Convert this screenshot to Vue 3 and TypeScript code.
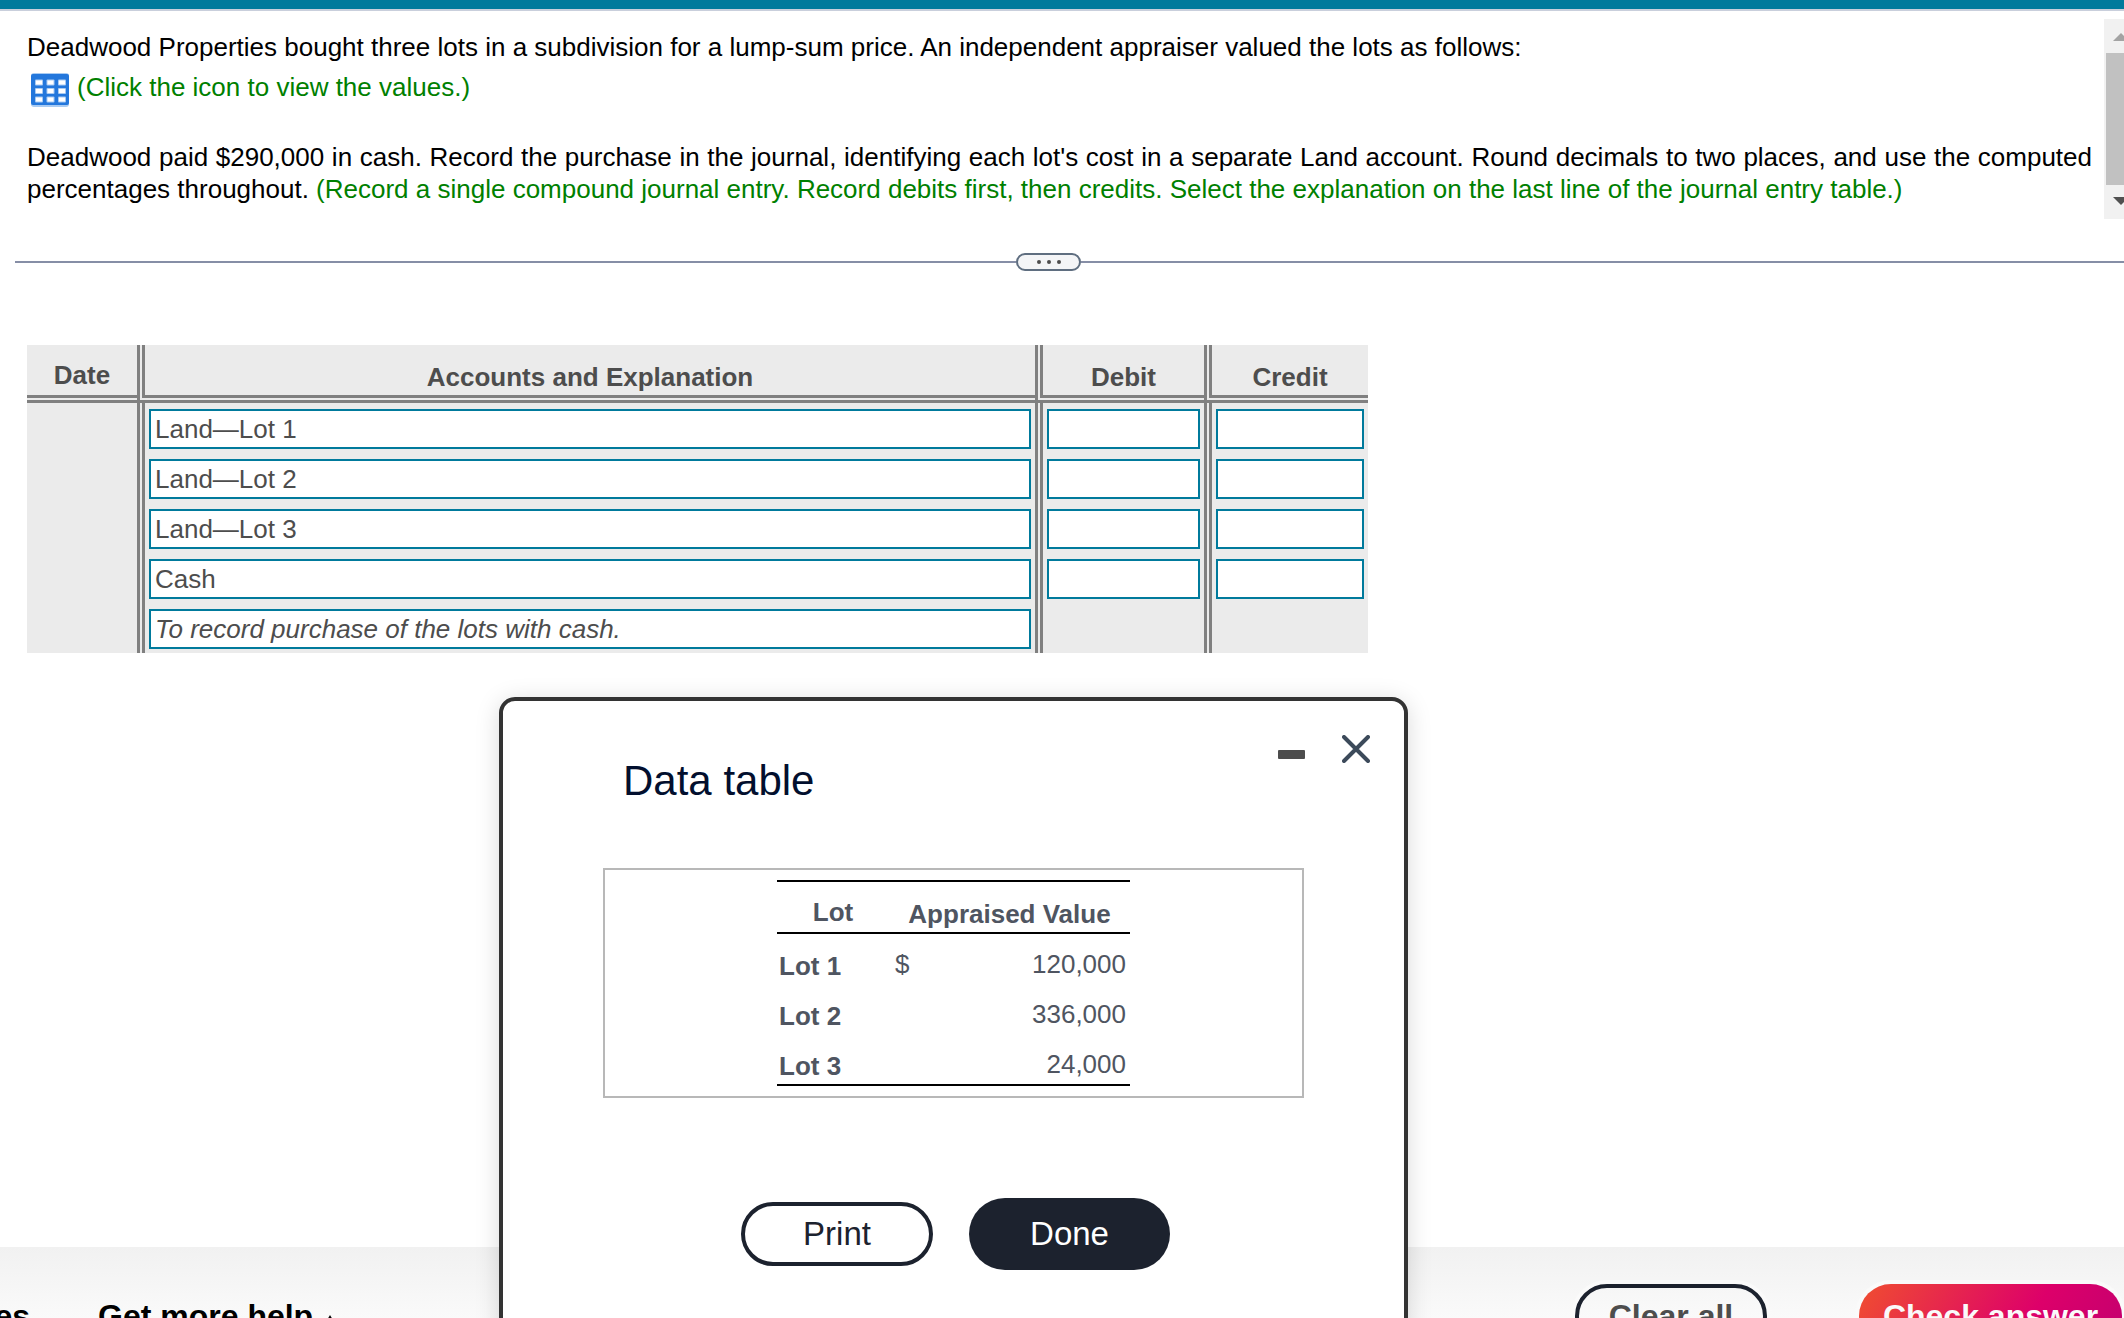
<script setup lang="ts">
import { ref } from 'vue'

interface JournalRow {
  account: string
  debit: string
  credit: string
}

interface LotRow {
  lot: string
  currency: string
  value: string
}

const rows = ref<JournalRow[]>([
  { account: 'Land—Lot 1', debit: '', credit: '' },
  { account: 'Land—Lot 2', debit: '', credit: '' },
  { account: 'Land—Lot 3', debit: '', credit: '' },
  { account: 'Cash', debit: '', credit: '' },
])
const explanation = ref('To record purchase of the lots with cash.')

const lots: LotRow[] = [
  { lot: 'Lot 1', currency: '$', value: '120,000' },
  { lot: 'Lot 2', currency: '', value: '336,000' },
  { lot: 'Lot 3', currency: '', value: '24,000' },
]

const iconColumns = [4, 15.5, 27]
const iconRows = [6.5, 15, 23.5]
</script>

<template>
  <div class="page">
    <div class="top-bar"></div>

    <section class="question">
      <div class="prompt">
        <p>
          Deadwood Properties bought three lots in a subdivision for a lump-sum price. An independent appraiser valued
          the lots as follows:
        </p>
        <a class="values-link" href="#values">
          <svg class="grid-icon" viewBox="0 0 38 34" aria-hidden="true">
            <rect width="38" height="34" rx="3" fill="#a9cbf2" />
            <rect y="1" width="38" height="31" rx="2" fill="#2377dc" />
            <template v-for="y in iconRows" :key="y">
              <g v-for="x in iconColumns" :key="x">
                <rect :x="x" :y="y" width="8" height="6" rx="1" fill="#a9cbf2" />
                <rect :x="x + 1" :y="y + 1" width="6" height="4" fill="#fff" />
              </g>
            </template>
          </svg>
          <span>(Click the icon to view the values.)</span>
        </a>
        <p>
          Deadwood paid $290,000 in cash. Record the purchase in the journal, identifying each lot's cost in a separate
          Land account. Round decimals to two places, and use the computed percentages throughout.
          <span class="hint">(Record a single compound journal entry. Record debits first, then credits. Select the
            explanation on the last line of the journal entry table.)</span>
        </p>
      </div>
      <div class="scrollbar" aria-hidden="true">
        <svg viewBox="0 0 20 34"><path d="M9 22L17 14L25 22Z" fill="#a3a3a3" /></svg>
        <div class="thumb"></div>
        <svg viewBox="0 0 20 34"><path d="M9 12L17 20L25 12Z" fill="#505050" /></svg>
      </div>
    </section>

    <div class="divider">
      <span class="rule rule-left"></span>
      <button class="handle" type="button" aria-label="Resize question area">
        <i></i><i></i><i></i>
      </button>
      <span class="rule rule-right"></span>
    </div>

    <main class="work">
      <table class="journal">
        <colgroup>
          <col class="c-date" />
          <col class="c-account" />
          <col class="c-debit" />
          <col class="c-credit" />
        </colgroup>
        <thead>
          <tr>
            <th scope="col">Date</th>
            <th scope="col">Accounts and Explanation</th>
            <th scope="col">Debit</th>
            <th scope="col">Credit</th>
          </tr>
        </thead>
        <tbody>
          <tr v-for="(row, i) in rows" :key="i">
            <td></td>
            <td><input v-model="row.account" type="text" :aria-label="`Account, line ${i + 1}`" /></td>
            <td><input v-model="row.debit" type="text" :aria-label="`Debit, line ${i + 1}`" /></td>
            <td><input v-model="row.credit" type="text" :aria-label="`Credit, line ${i + 1}`" /></td>
          </tr>
          <tr>
            <td></td>
            <td><input v-model="explanation" class="explanation" type="text" aria-label="Explanation" /></td>
            <td></td>
            <td></td>
          </tr>
        </tbody>
      </table>
    </main>

    <footer class="footer">
      <span class="cut-label">es</span>
      <button class="help" type="button">
        Get more help
        <svg viewBox="0 0 14 14" aria-hidden="true"><path d="M7 0L14 12H0Z" fill="#000" /></svg>
      </button>
      <button class="foot-button clear" type="button">Clear all</button>
      <button class="foot-button check" type="button">Check answer</button>
    </footer>

    <section class="dialog" role="dialog" aria-labelledby="dialog-title">
      <header class="dialog-head">
        <h2 id="dialog-title">Data table</h2>
        <button class="minimize" type="button" aria-label="Minimize"><span></span></button>
        <button class="close" type="button" aria-label="Close">
          <svg viewBox="0 0 28 28" aria-hidden="true">
            <path d="M2 2L26 26M26 2L2 26" fill="none" stroke="#3c4a5a" stroke-width="4" stroke-linecap="round" />
          </svg>
        </button>
      </header>
      <div class="data-box">
        <table class="lots">
          <colgroup>
            <col class="c-lot" />
            <col class="c-currency" />
            <col />
          </colgroup>
          <thead>
            <tr>
              <th scope="col">Lot</th>
              <th scope="col" colspan="2">Appraised Value</th>
            </tr>
          </thead>
          <tbody>
            <tr v-for="row in lots" :key="row.lot">
              <th scope="row">{{ row.lot }}</th>
              <td>{{ row.currency }}</td>
              <td class="amount">{{ row.value }}</td>
            </tr>
          </tbody>
        </table>
      </div>
      <div class="dialog-actions">
        <button class="print" type="button">Print</button>
        <button class="done" type="button">Done</button>
      </div>
    </section>
  </div>
</template>

<style>
body {
  margin: 0;
  background: #fff;
}
</style>

<style scoped>
.page {
  position: relative;
  display: flex;
  flex-direction: column;
  height: 100vh;
  overflow: hidden;
  font-family: "Liberation Sans", Arial, sans-serif;
  font-size: 26px;
  line-height: 32px;
  color: #000;
}

.page * {
  box-sizing: border-box;
}

button,
input {
  margin: 0;
  padding: 0;
  border: 0;
  font: inherit;
  color: inherit;
  background: none;
}

svg {
  display: block;
}

.top-bar {
  flex: none;
  height: 11px;
  background: #007a9c;
  border-bottom: 2px solid #c9cfdc;
}

.question {
  display: flex;
  margin-top: 8px;
  height: 200px;
}

.prompt {
  flex: 1;
  min-width: 0;
  padding: 12px 12px 0 27px;
}

.prompt p {
  margin: 0;
  text-align: justify;
}

.values-link {
  display: flex;
  margin: 8px 0 38px 4px;
  color: #008000;
  text-decoration: none;
}

.grid-icon {
  width: 38px;
  height: 34px;
  margin: 2px 8px -4px 0;
}

.hint {
  color: #008000;
}

.scrollbar {
  display: flex;
  flex-direction: column;
  width: 20px;
  background: #f1f1f1;
}

.scrollbar svg {
  width: 20px;
  height: 34px;
}

.thumb {
  flex: 1;
  margin-left: 2px;
  background: #c1c1c1;
}

.divider {
  display: flex;
  align-items: center;
  height: 18px;
  margin: 34px 0 0 15px;
}

.rule {
  height: 2px;
  background: #868ea6;
}

.rule-left {
  flex: 24;
}

.rule-right {
  flex: 25;
}

.handle {
  display: flex;
  align-items: center;
  justify-content: center;
  gap: 6px;
  width: 65px;
  height: 18px;
  border: 2px solid #5f6e80;
  border-radius: 9px;
  background: #f4f5f7;
}

.handle i {
  width: 4px;
  height: 4px;
  border-radius: 2px;
  background: #4d4d4d;
}

.work {
  flex: 1;
  min-height: 0;
  padding: 74px 0 0 27px;
}

table {
  border-collapse: separate;
  border-spacing: 0;
  table-layout: fixed;
}

th,
td {
  padding: 0;
}

.journal {
  width: 1341px;
  background: #ebebeb;
  color: #4d4d4d;
}

.c-date {
  width: 110px;
}

.c-account {
  width: 898px;
}

.c-debit {
  width: 169px;
}

.c-credit {
  width: 164px;
}

thead th {
  vertical-align: bottom;
  padding-bottom: 2px;
}

thead th:first-child {
  padding-bottom: 4px;
}

.journal th {
  height: 58px;
  border-bottom: 8px double #808080;
}

.journal th + th,
.journal td + td {
  border-left: 8px double #808080;
}

.journal td {
  height: 50px;
  padding: 6px 4px 4px;
}

.journal input {
  display: block;
  width: 100%;
  height: 40px;
  padding: 0 4px;
  border: 2px solid #007a9c;
  background: #fff;
}

.journal .explanation {
  font-style: italic;
}

.footer {
  flex: none;
  display: flex;
  align-items: flex-start;
  height: 71px;
  padding: 37px 2px 0 0;
  overflow: hidden;
  background: linear-gradient(#f1f1f1, #fafafa);
  font-size: 32px;
  font-weight: bold;
  line-height: 64px;
}

.cut-label {
  display: flex;
  justify-content: flex-end;
  width: 30px;
  overflow: hidden;
}

.help {
  display: flex;
  align-items: center;
  gap: 10px;
  margin: 0 auto 0 68px;
}

.help svg {
  width: 14px;
  height: 14px;
  margin-top: 12px;
}

.foot-button {
  height: 64px;
  border-radius: 32px;
  box-shadow: 0 0 0 4px #fafafa;
  line-height: 56px;
}

.clear {
  width: 192px;
  margin-right: 92px;
  border: 4px solid #1c222e;
  color: #4d4d4d;
}

.check {
  width: 263px;
  color: #fafafa;
  background: linear-gradient(120deg, #f04e30, #dd006a 64%, #c3006f);
}

.dialog {
  position: absolute;
  top: 697px;
  left: 499px;
  width: 909px;
  height: 680px;
  padding: 0 100px;
  border: 4px solid #333;
  border-radius: 16px;
  background: #fff;
  box-shadow: 0 4px 24px rgba(0, 0, 0, 0.15);
}

.dialog-head {
  display: flex;
  align-items: flex-start;
  height: 167px;
  margin-right: -66px;
}

h2 {
  flex: 1;
  margin: 55px 0 0 20px;
  font-size: 42px;
  font-weight: normal;
  line-height: 50px;
  color: #020f2e;
}

.minimize {
  margin: 49px 37px 0 0;
}

.minimize span {
  display: block;
  width: 27px;
  height: 9px;
  border-radius: 1px;
  background: #4d4d4d;
}

.close {
  margin: 34px 0 0;
}

.close svg {
  width: 28px;
  height: 28px;
}

.data-box {
  display: flex;
  justify-content: center;
  height: 230px;
  padding-top: 10px;
  border: 2px solid #b8b8b8;
}

.lots {
  width: 353px;
  height: 206px;
  border-top: 2px solid #000;
  border-bottom: 2px solid #000;
  color: #4f5561;
}

.c-lot {
  width: 112px;
}

.c-currency {
  width: 60px;
}

.lots thead th {
  height: 52px;
  border-bottom: 2px solid #000;
}

.lots tbody th,
.lots td {
  height: 50px;
  vertical-align: bottom;
}

.lots tbody th {
  padding: 0 0 2px 2px;
  text-align: left;
}

.lots td {
  padding: 0 4px 4px 6px;
}

.amount {
  text-align: right;
}

.dialog-actions {
  display: flex;
  align-items: center;
  justify-content: center;
  gap: 36px;
  margin: 100px 0 0 4px;
  font-size: 33px;
}

.print {
  width: 192px;
  height: 64px;
  border: 4px solid #1c222e;
  border-radius: 32px;
  color: #1c222e;
}

.done {
  width: 201px;
  height: 72px;
  border-radius: 36px;
  background: #1c222e;
  color: #fff;
}
</style>
